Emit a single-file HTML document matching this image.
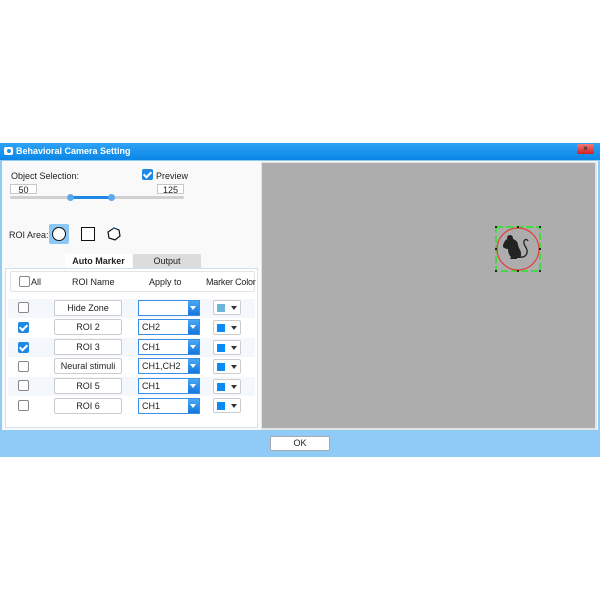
<!DOCTYPE html><html><head><style>
*{margin:0;padding:0;box-sizing:border-box}
body{width:600px;height:600px;background:#fff;position:relative;font-family:"Liberation Sans",sans-serif;font-size:9px;color:#222;overflow:hidden}
.a{position:absolute}
.inp{position:absolute;background:#fff;border:1px solid #c8c8c8;text-align:center;line-height:11px;font-size:9px}
.cb{position:absolute;width:11px;height:11px;border:1px solid #888;border-radius:2px;background:#fff}
.cbk{position:absolute;width:11px;height:11px;border-radius:2px;background:#1e88e5}
.cbk:after{content:"";position:absolute;left:3px;top:1px;width:3px;height:6px;border:solid #fff;border-width:0 2px 2px 0;transform:rotate(45deg)}
.name{position:absolute;left:54px;width:68px;height:16px;border:1px solid #ccc;background:#fff;text-align:center;line-height:14px;border-radius:2px}
.sel{position:absolute;left:138px;width:62px;height:16px;border:1px solid #3a8ee6;background:#fff;line-height:14px;padding-left:3px}
.sel b{position:absolute;right:0;top:0;width:11px;height:14px;background:linear-gradient(#4aa8f5,#1576dd)}
.sel b:after{content:"";position:absolute;left:2px;top:5px;border:3.5px solid transparent;border-top:4px solid #fff}
.col{position:absolute;left:213px;width:28px;height:15px;border:1px solid #ccc;background:#fff;border-radius:2px}
.col i{position:absolute;left:3px;top:3px;width:8px;height:8px;background:#0a8af5}
.col:after{content:"";position:absolute;left:17px;top:5px;border:3.5px solid transparent;border-top:4px solid #333}
</style></head><body>
<div class="a" style="left:0;top:143px;width:600px;height:314px;background:#8fcbf6"></div>
<div class="a" style="left:0;top:143px;width:600px;height:17px;background:linear-gradient(#2ea3f5,#0a86e8)"></div>
<div class="a" style="left:4px;top:147px;width:9px;height:8px;background:#fff;border-radius:2px"></div>
<div class="a" style="left:6.5px;top:148.5px;width:4px;height:4px;border-radius:50%;background:#1a8ee8"></div>
<div class="a" style="left:16px;top:146px;color:#fff;font-weight:bold;font-size:9px">Behavioral Camera Setting</div>
<div class="a" style="left:577px;top:144px;width:17px;height:10px;background:linear-gradient(#f47a7a,#d42020);border-radius:2px;color:#333;font-size:8px;text-align:center;line-height:10px;font-weight:bold">×</div>
<div class="a" style="left:2px;top:161px;width:596px;height:269px;background:#f9f9f9"></div>
<div class="a" style="left:261px;top:162px;width:336px;height:268px;background:#e4e4e4"></div>
<div class="a" style="left:262px;top:163px;width:333px;height:265px;background:#adadad"></div>
<svg class="a" style="left:490px;top:220px" width="60" height="60">
<rect x="6" y="7" width="44" height="44" fill="none" stroke="#1ee81e" stroke-width="1.5" stroke-dasharray="7,3"/>
<circle cx="28" cy="29" r="21" fill="none" stroke="#e43c3c" stroke-width="1.2"/>
<g fill="#000"><circle cx="6" cy="7" r="1"/><circle cx="28" cy="7" r="1"/><circle cx="50" cy="7" r="1"/><circle cx="6" cy="29" r="1"/><circle cx="50" cy="29" r="1"/><circle cx="6" cy="51" r="1"/><circle cx="28" cy="51" r="1"/><circle cx="50" cy="51" r="1"/></g>
<g fill="#222">
<circle cx="20" cy="18" r="3"/>
<path d="M14 23c1-4 5-5 9-4c3 1 5 3 5 6l1 3c2 3 3 7 1 10h-3l0 1h-7l1-2c-2-2-3-5-3-8c-2 0-4-1-5-2c0-2 0-3 1-4z"/>
</g>
<path d="M29 37c5 1 9-2 8-7c-1-4-4-5-3-9c1-2 3-2 4 0" fill="none" stroke="#222" stroke-width="1.3"/>
</svg>
<div class="a" style="left:11px;top:171px">Object Selection:</div>
<div class="cbk" style="left:142px;top:169px"></div>
<div class="a" style="left:156px;top:171px">Preview</div>
<div class="inp" style="left:10px;top:184px;width:27px;height:10px">50</div>
<div class="inp" style="left:157px;top:184px;width:27px;height:10px">125</div>
<div class="a" style="left:10px;top:196px;width:174px;height:3px;background:#d0d0d0;border-radius:2px"></div>
<div class="a" style="left:70px;top:196px;width:42px;height:3px;background:#1e88e5"></div>
<div class="a" style="left:67px;top:194px;width:7px;height:7px;border-radius:50%;background:#5aa9ef"></div>
<div class="a" style="left:108px;top:194px;width:7px;height:7px;border-radius:50%;background:#5aa9ef"></div>
<div class="a" style="left:9px;top:230px">ROI Area:</div>
<div class="a" style="left:49px;top:224px;width:20px;height:20px;background:#8cc7f5;border-radius:2px"></div>
<div class="a" style="left:52px;top:227px;width:14px;height:14px;border:1.3px solid #111;border-radius:50%;background:#fff"></div>
<div class="a" style="left:81px;top:227px;width:14px;height:14px;border:1.3px solid #111;background:#fff"></div>
<svg class="a" style="left:106px;top:226px" width="16" height="16"><polygon points="8,2 13,4 14,10 9,14 3,12 2,6" fill="#fff" stroke="#111" stroke-width="1.2"/><circle cx="8" cy="2" r="1" fill="#1e88e5"/></svg>
<div class="a" style="left:65px;top:254px;width:67px;height:15px;background:#fff;font-weight:bold;text-align:center;line-height:15px">Auto Marker</div>
<div class="a" style="left:133px;top:254px;width:68px;height:14px;background:#dcdcdc;text-align:center;line-height:14px">Output</div>
<div class="a" style="left:5px;top:268px;width:253px;height:160px;background:#fff;border:1px solid #cfe3f5"></div>
<div class="a" style="left:10px;top:271px;width:245px;height:21px;border:1px solid #e4e4e4;border-radius:2px"></div>
<div class="cb" style="left:19px;top:276px"></div>
<div class="a" style="left:31px;top:277px">All</div>
<div class="a" style="left:72px;top:277px">ROI Name</div>
<div class="a" style="left:149px;top:277px">Apply to</div>
<div class="a" style="left:206px;top:277px;letter-spacing:-0.2px">Marker Color</div>
<div class="a" style="left:8px;top:299px;width:247px;height:19px;background:#f4f7fb"></div>
<div class="a" style="left:8px;top:338px;width:247px;height:19px;background:#f4f7fb"></div>
<div class="a" style="left:8px;top:377px;width:247px;height:19px;background:#f4f7fb"></div>

<div class="cb" style="left:18px;top:302px"></div><div class="name" style="top:300px">Hide Zone</div><div class="sel" style="top:300px"><b></b></div><div class="col" style="top:300px"><i style="background:#6cb4dc"></i></div>
<div class="cbk" style="left:18px;top:322px"></div><div class="name" style="top:319px">ROI 2</div><div class="sel" style="top:319px">CH2<b></b></div><div class="col" style="top:320px"><i></i></div>
<div class="cbk" style="left:18px;top:342px"></div><div class="name" style="top:339px">ROI 3</div><div class="sel" style="top:339px">CH1<b></b></div><div class="col" style="top:340px"><i></i></div>
<div class="cb" style="left:18px;top:361px"></div><div class="name" style="top:358px">Neural stimuli</div><div class="sel" style="top:358px">CH1,CH2<b></b></div><div class="col" style="top:359px"><i></i></div>
<div class="cb" style="left:18px;top:380px"></div><div class="name" style="top:378px">ROI 5</div><div class="sel" style="top:378px">CH1<b></b></div><div class="col" style="top:379px"><i></i></div>
<div class="cb" style="left:18px;top:400px"></div><div class="name" style="top:398px">ROI 6</div><div class="sel" style="top:398px">CH1<b></b></div><div class="col" style="top:398px"><i></i></div>

<div class="a" style="left:270px;top:436px;width:60px;height:15px;background:#fff;border:1px solid #aaa;border-radius:2px;text-align:center;line-height:13px">OK</div>
</body></html>
